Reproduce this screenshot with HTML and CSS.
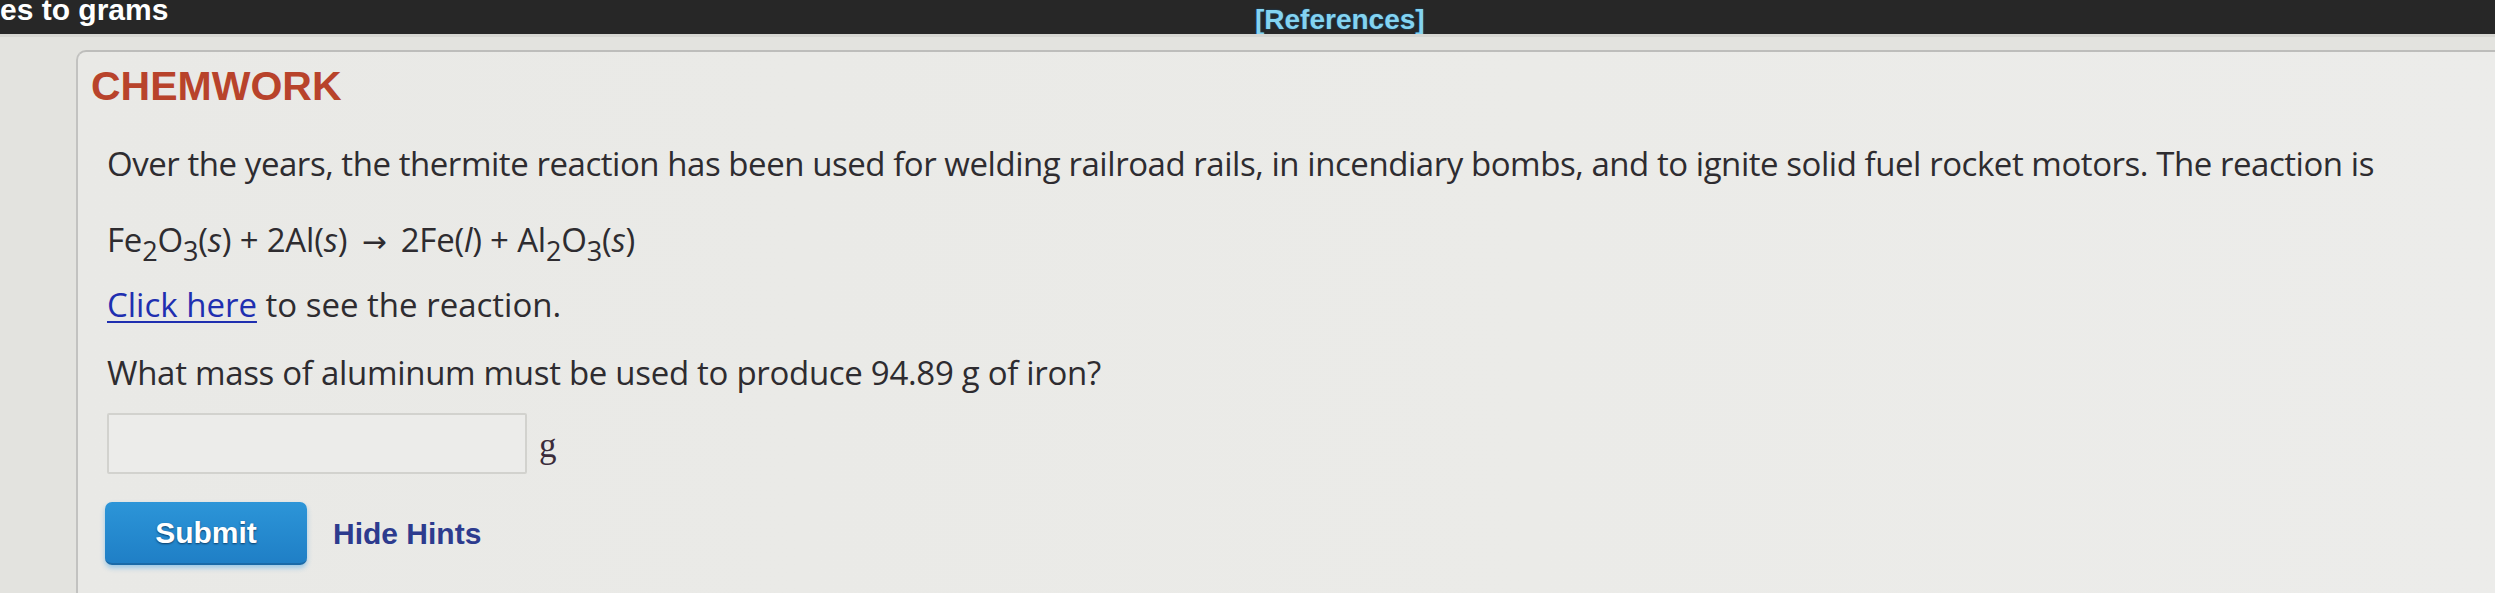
FILE: index.html
```html
<!DOCTYPE html>
<html lang="en">
<head>
    <meta charset="UTF-8">
    <meta name="viewport" content="width=device-width, initial-scale=1.0">
    <title>Moles to grams</title>
    <link rel="stylesheet" href="styles.css">
</head>
<body>
    <div class="topbar">
        <div class="topbar-title">es to grams</div>
        <a class="refs" href="#">[References]</a>
    </div>

    <div class="page">
        <div class="panel">
            <h1 class="brand">CHEMWORK</h1>

            <div class="question">
                <p class="intro">Over the years, the thermite reaction has been used for welding railroad rails, in incendiary bombs, and to ignite solid fuel rocket motors. The reaction is</p>
                <p class="equation">Fe<sub>2</sub>O<sub>3</sub>(<i>s</i>) + 2Al(<i>s</i>) <span class="arrow">&rarr;</span> 2Fe(<i>l</i>) + Al<sub>2</sub>O<sub>3</sub>(<i>s</i>)</p>
                <p class="link-line"><a href="#" class="link">Click here</a> to see the reaction.</p>
                <p class="ask">What mass of aluminum must be used to produce 94.89 g of iron?</p>

                <div class="answer-row">
                    <input type="text" class="answer" />
                    <span class="unit">g</span>
                </div>

                <div class="actions">
                    <button type="button" class="button">Submit</button>
                    <a href="#" class="hints">Hide Hints</a>
                </div>
            </div>
        </div>
    </div>
</body>
</html>
```

FILE: styles.css
```css
body {
    margin: 0;
    background-color: #e3e3df;
    font-family: "Open Sans", sans-serif;
    color: #2e2c30;
    overflow: hidden;
}
.topbar {
    display: grid;
    grid-template-columns: 1255px auto;
    height: 34px;
    background-color: #272727;
    border-bottom: 3px solid #d6d6d2;
    overflow: hidden;
}
.topbar-title {
    font-family: "Liberation Sans", Arial, sans-serif;
    font-weight: bold;
    font-size: 30px;
    line-height: 30px;
    margin-top: -5px;
    color: #fff;
}
.refs {
    font-family: "Liberation Sans", Arial, sans-serif;
    font-weight: bold;
    font-size: 28px;
    line-height: 30px;
    margin-top: 5px;
    color: #84d3f0;
    text-decoration: none;
    text-shadow: 0 0 2px #1d4f73, 0 0 1px #1d4f73;
}
.page {
    padding: 13px 0 0 76px;
}
.panel {
    min-height: 540px;
    background: linear-gradient(90deg, #e9e9e6 0%, #ebebe8 60%, #ececea 100%);
    border-top: 2px solid #bdbdbb;
    border-left: 2px solid #c2c2c0;
    border-top-left-radius: 10px;
    padding: 11px 0 0 13px;
}
.brand {
    margin: 0;
    font-family: "Liberation Sans", Arial, sans-serif;
    font-weight: bold;
    font-size: 41px;
    line-height: 46px;
    color: #b8432b;
}
.question {
    padding: 32px 0 0 16px;
}
.question p {
    margin: 0;
    font-size: 33px;
    line-height: 46px;
}
.intro {
    letter-spacing: -0.45px;
    margin-bottom: 30px !important;
}
.equation {
    letter-spacing: -0.2px;
    margin-bottom: 17px !important;
}
.equation sub {
    font-size: 0.82em;
    vertical-align: -0.32em;
    line-height: 0;
}
.equation i {
    font-style: italic;
}
.arrow {
    font-family: "DejaVu Sans", sans-serif;
    font-size: 0.9em;
    margin: 0 6px;
}
.link-line {
    margin-bottom: 22px !important;
}
.link {
    color: #1f2fb0;
    text-decoration: underline;
    text-decoration-thickness: 2px;
    text-underline-offset: 4px;
}
.ask {
    letter-spacing: -0.3px;
}
.answer-row {
    display: flex;
    align-items: center;
    gap: 12px;
    margin-top: 17px;
}
.answer {
    width: 420px;
    height: 61px;
    box-sizing: border-box;
    margin: 0;
    border: 2px solid #d2d2ce;
    background-color: #ececea;
    border-radius: 2px;
}
.unit {
    font-family: "Liberation Serif", serif;
    font-size: 35px;
    color: #3a2c3a;
    margin-top: 4px;
}
.actions {
    display: flex;
    align-items: center;
    gap: 26px;
    margin-top: 28px;
    margin-left: -2px;
}
.button {
    width: 202px;
    height: 63px;
    border: none;
    border-bottom: 2px solid #1a6aa8;
    border-radius: 7px;
    background: linear-gradient(#2c95d8, #1f7fc6);
    box-shadow: 0 3px 5px rgba(60, 160, 230, 0.45);
    color: #fff;
    font-family: "Liberation Sans", Arial, sans-serif;
    font-weight: bold;
    font-size: 30px;
    text-shadow: 0 1px 2px #0d3d66;
    cursor: pointer;
}
.hints {
    font-family: "Liberation Sans", Arial, sans-serif;
    font-weight: bold;
    font-size: 30px;
    color: #2d3b8e;
    text-decoration: none;
}
```
